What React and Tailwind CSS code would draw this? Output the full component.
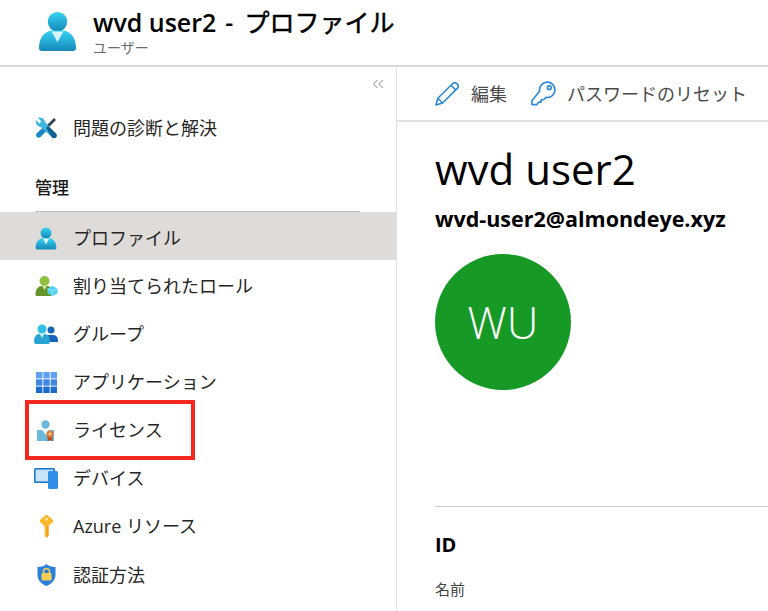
import React from 'react';
import { ChevronsLeft } from 'lucide-react';

const UserIcon = ({ className }) => (
  <svg viewBox="0 0 40 42" className={className}>
    <defs>
      <linearGradient id="ug" x1="0" y1="0" x2="0" y2="1">
        <stop offset="0" stopColor="#37d3f5" />
        <stop offset="1" stopColor="#1488b8" />
      </linearGradient>
    </defs>
    <circle cx="20" cy="11" r="10" fill="url(#ug)" />
    <path d="M1 38c0-11 6-17 13-18h12c7 1 13 7 13 18 0 2-1 3-3 3H4c-2 0-3-1-3-3z" fill="url(#ug)" />
    <path d="M14 21h12l-6 11z" fill="#d8f3fb" />
  </svg>
);

const WrenchIcon = () => (
  <svg viewBox="0 0 22 22" className="w-[22px] h-[22px]">
    {/* screwdriver */}
    <path d="M19 1l2 2-8 8-2-2z" fill="#32414d" />
    <path d="M9 9.500l3.500 3.500-7 7c-1 1-2.800 1-3.700 0s-1-2.700 0-3.700z" fill="#1a86c7" />
    {/* wrench */}
    <path d="M1 3l3.500 3.500 2-2L3 1c3-1.200 6.500.5 7 4l11 11.500c1 1 1 3 0 4s-3 1-4 0L6 10C2.500 9.500.2 6.500 1 3z" fill="#3fb8dd" />
    <path d="M11 11l2-2 8 7.500c1 1 1 3 0 4s-3 1-4 0z" fill="#125e8f" />
  </svg>
);

const RoleIcon = () => (
  <svg viewBox="0 0 22 22" className="w-[23px] h-[22px]">
    <circle cx="9" cy="6" r="5" fill="#8fc13f" />
    <path d="M0 19c0-5 3-8 6-8h6c3 0 6 3 6 8 0 1 0 2-1 2H1c-1 0-1-1-1-2z" fill="#66952b" />
    <path d="M7 11h4l-2 4z" fill="#d9eebd" />
    <path d="M17 11l5 2.500v5L17 21l-5-2.500v-5z" fill="#4fd0f0" />
    <path d="M17 16l5-2.500M17 16v5M17 16l-5-2.500" stroke="#bff0fb" strokeWidth="0.7" />
  </svg>
);

const GroupIcon = () => (
  <svg viewBox="0 0 24 20" className="w-[24px] h-[20px]">
    <circle cx="17" cy="6" r="3.500" fill="#1565b8" />
    <path d="M11 17c0-4 2-6 4-6h4c3 0 5 2 5 6 0 1 0 1-1 1H12c-1 0-1 0-1-1z" fill="#1565b8" />
    <circle cx="8" cy="5" r="4.500" fill="#32bfe6" />
    <path d="M0 18c0-5 2-8 5-8h6c3 0 5 3 5 8 0 1-1 2-2 2H2c-1 0-2-1-2-2z" fill="#2ba4d4" />
    <path d="M6 10h4l-2 4z" fill="#d8f3fb" />
  </svg>
);

const AppsIcon = () => (
  <svg viewBox="0 0 21 21" className="w-[21px] h-[21px]">
    {[0, 7.3, 14.6].map((y, r) =>
      [0, 7.3, 14.6].map((x) => (
        <rect key={`${x}-${y}`} x={x} y={y} width="6.4" height="6.4" fill={['#5ea0ef', '#3f86e0', '#1a6ccb'][r]} />
      ))
    )}
  </svg>
);

const LicenseIcon = () => (
  <svg viewBox="0 0 18 22" className="w-[18px] h-[22px]">
    <circle cx="8.500" cy="4.500" r="4.200" fill="#6cb9dc" />
    <path d="M0 10h17v11H0z" fill="#6cb9dc" />
    <path d="M5 10h7l-3 5z" fill="#e4f5fb" />
    <path d="M10.500 16h5v5.500l-2.500-1.500-2.500 1.500z" fill="#b8501f" />
    <circle cx="13" cy="14" r="3.600" fill="#e07b35" />
    <circle cx="13" cy="14" r="1.500" fill="#f6d08a" />
  </svg>
);

const DeviceIcon = () => (
  <svg viewBox="0 0 24 21" className="w-[24px] h-[21px]">
    <rect x="0" y="0" width="21" height="15" rx="1.500" fill="#1f78d1" />
    <rect x="1.600" y="1.600" width="17.500" height="11.800" fill="#c6e3f7" />
    <rect x="14" y="3" width="10" height="18" rx="1.500" fill="#2f8fe6" />
  </svg>
);

const KeyIcon = () => (
  <svg viewBox="0 0 14 23" className="w-[15px] h-[23px]">
    <path d="M7 0c1 0 1.500.5 2 1l4 3.500c1 1 1 2 0 3L9 11v9.500L7 23l-2-2.500v-2l1-1-1-1v-5.500L1 7.500c-1-1-1-2 0-3L5 1c.5-.5 1-1 2-1z" fill="#fbb92e" />
    <circle cx="7" cy="4" r="1.500" fill="#fde49a" />
    <path d="M7 11h2v9.500L7 23z" fill="#ee9f16" />
  </svg>
);

const ShieldIcon = () => (
  <svg viewBox="0 0 19 22" className="w-[19px] h-[22px]">
    <path d="M9.500 0c2 2 5 3 9 3v8c0 5-4 9-9 11-5-2-9-6-9-11V3c4 0 7-1 9-3z" fill="#2a80dc" />
    <path d="M6.500 9.500V7.500a3 3 0 0 1 6 0v2" fill="none" stroke="#f7cc55" strokeWidth="1.500" />
    <rect x="4.500" y="9" width="10" height="7.500" rx="1" fill="#f7cc55" />
  </svg>
);

const PencilIcon = () => (
  <svg viewBox="0 0 24 24" className="w-[24px] h-[24px]" fill="none" stroke="#2b88d8" strokeWidth="1.600" strokeLinejoin="round">
    <path d="M1 23l1.800-6.800L17.800 1.500c1-1 2.800-1 3.900.1l.7.7c1.100 1.100 1.100 2.700.1 3.800L7.600 21z" />
    <path d="M2.800 16.200l4.800 4.800M16 3.300l4.800 4.800" />
  </svg>
);

const ResetKeyIcon = () => (
  <svg viewBox="0 0 26 26" className="w-[25px] h-[25px]" fill="none" stroke="#2b88d8" strokeWidth="1.700" strokeLinejoin="round">
    <path d="M9 10.500a8 8 0 1 1 6.500 6.500l-2.500 2.500h-2.500v2.500H8l-2 2.500H1v-4z" />
    <circle cx="19" cy="7" r="2" />
  </svg>
);

const menu = [
  { label: 'プロファイル', icon: <UserIcon className="w-[22px] h-[23px]" />, active: true },
  { label: '割り当てられたロール', icon: <RoleIcon /> },
  { label: 'グループ', icon: <GroupIcon /> },
  { label: 'アプリケーション', icon: <AppsIcon /> },
  { label: 'ライセンス', icon: <LicenseIcon /> },
  { label: 'デバイス', icon: <DeviceIcon /> },
  { label: 'Azure リソース', icon: <KeyIcon /> },
  { label: '認証方法', icon: <ShieldIcon /> },
];

const MenuRow = ({ item }) => (
  <div className={`flex items-center h-[48.15px] pt-[4px] pl-[34px] ${item.active ? 'bg-[#dedbd8]' : ''}`}>
    <div className="w-[24px] flex justify-center shrink-0">{item.icon}</div>
    <span className="ml-[15px] text-[18px] text-[#262626]">{item.label}</span>
  </div>
);

export default function App() {
  return (
    <div className="w-[768px] h-[611px] overflow-hidden bg-white flex flex-col font-['Open_Sans','Noto_Sans_CJK_JP',sans-serif]">
      {/* Header */}
      <div className="h-[67px] shrink-0 flex border-b-2 border-[#d9d9d9] pl-[38px]">
        <UserIcon className="w-[39px] h-[43px] mt-[10px]" />
        <div className="ml-[16px] pt-[5px]">
          <div className="flex text-[25px] leading-[34px] font-semibold text-black whitespace-nowrap">
            <span>wvd user2</span>
            <span className="ml-[9px]">-</span>
            <span className="ml-[11px] font-normal [-webkit-text-stroke:0.5px_black]">プロファイル</span>
          </div>
          <div className="text-[14px] leading-[18px] text-[#6b6b6b]">ユーザー</div>
        </div>
      </div>

      <div className="flex flex-1 min-h-0">
        {/* Sidebar */}
        <div className="relative w-[397px] shrink-0 border-r border-[#e0e0e0]">
          <div className="flex justify-end pr-[9px] pt-[8px] h-[24px]">
            <ChevronsLeft className="w-[18px] h-[18px] text-[#777]" strokeWidth={1.2} />
          </div>
          <div className="flex items-center h-[48px] pl-[34px] mt-[13px]">
            <div className="w-[24px] flex justify-center shrink-0"><WrenchIcon /></div>
            <span className="ml-[15px] text-[18px] text-[#262626]">問題の診断と解決</span>
          </div>
          <div className="pl-[35px] mt-[23px] text-[17px] font-medium leading-[26px] text-[#1a1a1a]">管理</div>
          <div className="ml-[35px] w-[325px] mt-[10px] border-b border-[#bdbdbd]" />
          {menu.map((item) => (
            <MenuRow key={item.label} item={item} />
          ))}
          {/* highlight box */}
          <div className="absolute left-[25px] top-[333px] w-[170px] h-[60px] border-4 border-[#f5281f]" />
        </div>

        {/* Main */}
        <div className="flex-1 min-w-0">
          <div className="h-[55px] flex items-center border-b-2 border-[#e0e0e0] pl-[38px]">
            <PencilIcon />
            <span className="ml-[12px] mt-[2px] text-[18px] text-[#4a4a4a]">編集</span>
            <div className="ml-[24px]"><ResetKeyIcon /></div>
            <span className="ml-[11px] mt-[2px] text-[18px] text-[#4a4a4a]">パスワードのリセット</span>
          </div>
          <div className="pl-[38px]">
            <div className="text-[42px] leading-[54px] mt-[20px] text-black">wvd user2</div>
            <div className="text-[21.5px] font-bold leading-[26px] mt-[10px] text-black whitespace-nowrap">wvd-user2@almondeye.xyz</div>
            <div className="w-[136px] h-[136px] rounded-full bg-[#179a25] flex items-center justify-center mt-[22px] text-white text-[44px] font-light">WU</div>
            <div className="border-b border-[#d0d0d0] mt-[116px]" />
            <div className="text-[20px] font-bold leading-[28px] mt-[24px] text-black">ID</div>
            <div className="text-[15px] leading-[20px] mt-[20px] text-[#444]">名前</div>
          </div>
        </div>
      </div>
    </div>
  );
}
